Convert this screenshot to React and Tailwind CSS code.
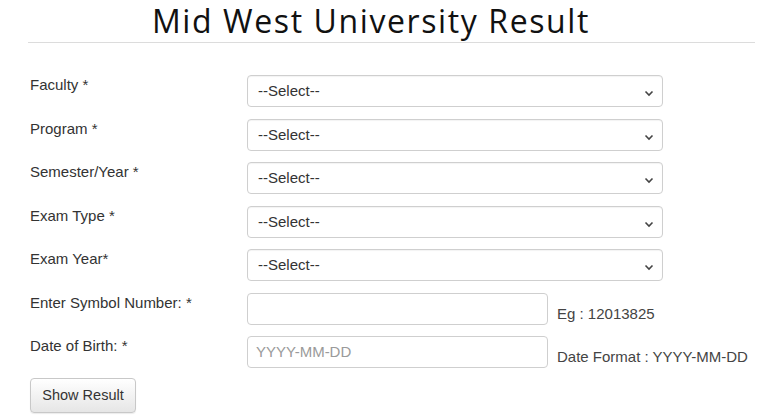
import React from 'react';

const selects = ['Faculty *', 'Program *', 'Semester/Year *', 'Exam Type *', 'Exam Year*'];

const Chevron = () => (
  <svg width="10" height="10" viewBox="0 0 10 10" className="absolute right-[8px] top-[12px]">
    <path d="M1.5 3.5 L5 7 L8.5 3.5" fill="none" stroke="#444" strokeWidth="1.6" />
  </svg>
);

const App = () => {
  return (
    <div className="w-[768px] h-[420px] bg-white overflow-hidden font-['Liberation_Sans',Arial,sans-serif] text-[15px] text-[#333]">
      <div className="pl-[28px] pr-[13px]">
        <div className="h-[42px] pr-[41px] text-center">
          <h1 className="font-['Open_Sans',sans-serif] text-[32px] leading-[42px] text-[#111] tracking-[1.6px]">
            Mid West University Result
          </h1>
        </div>
        <hr className="border-0 border-t border-[#dcdcdc]" />
      </div>

      <div className="pl-[30px] pt-[32px] flex flex-col gap-[11.5px]">
        {selects.map((label) => (
          <div key={label} className="flex">
            <div className="w-[217px] leading-[20px]">{label}</div>
            <div className="relative w-[416px] h-[32px] rounded-[4px] border border-[#cfcfcf] shadow-[inset_0_1px_1px_rgba(0,0,0,0.05)] pl-[10px] leading-[30px]">
              --Select--
              <Chevron />
            </div>
          </div>
        ))}

        <div className="flex">
          <div className="w-[217px] leading-[20px]">Enter Symbol Number: *</div>
          <div className="w-[301px] h-[32px] rounded-[4px] border border-[#cfcfcf]" />
          <div className="pl-[9px] pt-[11px] leading-[20px] text-[#444]">Eg : 12013825</div>
        </div>

        <div className="flex">
          <div className="w-[217px] leading-[20px]">Date of Birth: *</div>
          <div className="w-[301px] h-[32px] rounded-[4px] border border-[#cfcfcf] pl-[8px] leading-[30px] text-[#9a9a9a]">
            YYYY-MM-DD
          </div>
          <div className="pl-[9px] pt-[11px] leading-[20px] text-[#444]">Date Format : YYYY-MM-DD</div>
        </div>

        <div className="-mt-[1.5px]">
          <button className="w-[106px] h-[35px] rounded-[4px] border border-[#c8c8c8] bg-gradient-to-b from-white to-[#e6e6e6] text-[14.5px] text-[#333] shadow-[0_1px_1px_rgba(0,0,0,0.08)]">
            Show Result
          </button>
        </div>
      </div>
    </div>
  );
};

export default App;
